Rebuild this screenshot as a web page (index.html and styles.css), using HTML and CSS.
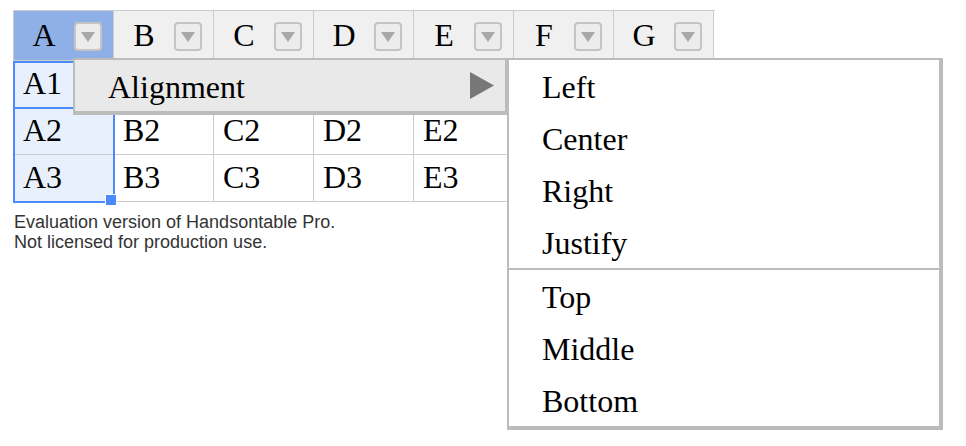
FILE: index.html
```html
<!DOCTYPE html>
<html>
<head>
<meta charset="utf-8">
<link rel="stylesheet" href="styles.css">
</head>
<body>
<div class="page">
  <div class="hot">
    <div class="row">
      <div class="th active"><span class="lbl">A</span><span class="btn"><svg width="14" height="10" viewBox="0 0 14 10"><polygon points="0,0 14,0 7,10" fill="#a8a8a8"/></svg></span></div>
      <div class="th"><span class="lbl">B</span><span class="btn"><svg width="14" height="10" viewBox="0 0 14 10"><polygon points="0,0 14,0 7,10" fill="#a8a8a8"/></svg></span></div>
      <div class="th"><span class="lbl">C</span><span class="btn"><svg width="14" height="10" viewBox="0 0 14 10"><polygon points="0,0 14,0 7,10" fill="#a8a8a8"/></svg></span></div>
      <div class="th"><span class="lbl">D</span><span class="btn"><svg width="14" height="10" viewBox="0 0 14 10"><polygon points="0,0 14,0 7,10" fill="#a8a8a8"/></svg></span></div>
      <div class="th"><span class="lbl">E</span><span class="btn"><svg width="14" height="10" viewBox="0 0 14 10"><polygon points="0,0 14,0 7,10" fill="#a8a8a8"/></svg></span></div>
      <div class="th"><span class="lbl">F</span><span class="btn"><svg width="14" height="10" viewBox="0 0 14 10"><polygon points="0,0 14,0 7,10" fill="#a8a8a8"/></svg></span></div>
      <div class="th"><span class="lbl">G</span><span class="btn"><svg width="14" height="10" viewBox="0 0 14 10"><polygon points="0,0 14,0 7,10" fill="#a8a8a8"/></svg></span></div>
    </div>
    <div class="row">
      <div class="td sel">A1</div><div class="td"></div><div class="td"></div><div class="td"></div><div class="td"></div><div class="td"></div><div class="td"></div>
    </div>
    <div class="row">
      <div class="td sel">A2</div><div class="td">B2</div><div class="td">C2</div><div class="td">D2</div><div class="td">E2</div><div class="td"></div><div class="td"></div>
    </div>
    <div class="row">
      <div class="td sel">A3</div><div class="td">B3</div><div class="td">C3</div><div class="td">D3</div><div class="td">E3</div><div class="td"></div><div class="td"></div>
    </div>
    <div class="area"></div>
    <div class="current"></div>
    <div class="fill"></div>
  </div>
  <div class="notice">Evaluation version of Handsontable Pro.<br>Not licensed for production use.</div>

  <div class="menu">
    <div class="menu-item hover"><span>Alignment</span><svg width="24" height="27" viewBox="0 0 24 27"><polygon points="0,0 24,13.5 0,27" fill="#777"/></svg></div>
  </div>

  <div class="submenu">
    <div class="sub-item">Left</div>
    <div class="sub-item">Center</div>
    <div class="sub-item">Right</div>
    <div class="sub-item">Justify</div>
    <div class="sep"></div>
    <div class="sub-item">Top</div>
    <div class="sub-item">Middle</div>
    <div class="sub-item">Bottom</div>
  </div>
</div>
</body>
</html>
```
FILE: styles.css
```css
html, body {
  margin: 0;
  background: #fff;
}
body {
  font-family: "Liberation Serif", "Times New Roman", serif;
  color: #000;
}
.page {
  position: relative;
  width: 966px;
  height: 446px;
  padding: 10px 0 0 13px;
  box-sizing: border-box;
  overflow: hidden;
}
.hot {
  position: relative;
  width: 701px;
  border-top: 1px solid #ccc;
  border-left: 1px solid #ccc;
}
.row {
  display: flex;
}
.th {
  width: 99px;
  height: 49px;
  border-right: 1px solid #ccc;
  border-bottom: 1px solid #ccc;
  background: #f0f0f0;
  display: flex;
  align-items: center;
  font-size: 32px;
}
.th.active {
  background: #8eb0e7;
}
.lbl {
  flex: 1;
  text-align: center;
}
.btn {
  width: 24px;
  height: 25px;
  border: 2px solid #c4c4c4;
  border-radius: 4px;
  background: #ececec;
  margin-right: 11px;
  margin-top: 2px;
  display: flex;
  align-items: center;
  justify-content: center;
}
.btn svg {
  display: block;
}
.td {
  width: 90px;
  padding-left: 9px;
  height: 46px;
  line-height: 44px;
  border-right: 1px solid #ccc;
  border-bottom: 1px solid #ccc;
  font-size: 32px;
  background: #fff;
}
.td.sel {
  background: #e8f0fe;
}
.area {
  position: absolute;
  left: -1px;
  top: 50px;
  width: 102px;
  height: 142px;
  box-sizing: border-box;
  border: 2px solid #4b89ff;
}
.current {
  position: absolute;
  left: -1px;
  top: 50px;
  width: 102px;
  height: 48px;
  box-sizing: border-box;
  border: 2px solid #4b89ff;
}
.fill {
  position: absolute;
  left: 91px;
  top: 183px;
  width: 10px;
  height: 10px;
  background: #4b89ff;
  border: 1px solid #fff;
}
.notice {
  margin-top: 10px;
  padding-left: 1px;
  font-family: "Liberation Sans", Arial, sans-serif;
  font-size: 18px;
  line-height: 20px;
  color: #333;
}
.menu {
  position: absolute;
  left: 73px;
  top: 58px;
  width: 436px;
  box-sizing: border-box;
  border: 2px solid #bcbcbc;
  border-right-width: 4px;
  border-bottom-width: 4px;
  background: #fff;
}
.menu-item {
  height: 48px;
  padding: 3px 11px 0 33px;
  display: flex;
  align-items: center;
  justify-content: space-between;
  font-size: 32px;
}
.menu-item.hover {
  background: #e9e9e9;
}
.menu-item svg {
  display: block;
  margin-top: -3px;
}
.submenu {
  position: absolute;
  left: 507px;
  top: 58px;
  width: 436px;
  box-sizing: border-box;
  border: 2px solid #bcbcbc;
  border-right-width: 4px;
  border-bottom-width: 4px;
  background: #fff;
}
.sub-item {
  height: 49px;
  padding-top: 3px;
  line-height: 49px;
  padding-left: 33px;
  font-size: 32px;
}
.sep {
  height: 2px;
  background: #bcbcbc;
}
```
